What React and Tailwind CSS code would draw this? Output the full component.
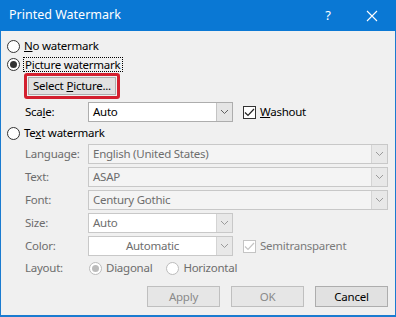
import React from 'react';

const font = { fontFamily: '"Noto Sans", "Open Sans", sans-serif' };

function Chevron({ disabled }) {
  return (
    <svg width="9" height="6" viewBox="0 0 9 6">
      <polyline points="1,1 4.5,4.5 8,1" fill="none" stroke={disabled ? '#9a9a9a' : '#606060'} strokeWidth="1" />
    </svg>
  );
}

function Radio({ checked, disabled }) {
  return (
    <span className={`flex items-center justify-center w-[13px] h-[13px] rounded-full border bg-white shrink-0
      ${disabled ? 'border-[#bcbcbc]' : 'border-[#333]'}`}>
      {checked && (
        <span className={`w-[7px] h-[7px] rounded-full ${disabled ? 'bg-[#bcbcbc]' : 'bg-[#333]'}`} />
      )}
    </span>
  );
}

function Check({ disabled }) {
  return (
    <span className={`flex items-center justify-center w-[13px] h-[13px] border bg-white shrink-0
      ${disabled ? 'border-[#c4c4c4]' : 'border-[#333]'}`}>
      <svg width="11" height="9" viewBox="0 0 11 9">
        <polyline points="1,4.5 4,7.5 10,1" fill="none" stroke={disabled ? '#c4c4c4' : '#222'} strokeWidth="1.2" />
      </svg>
    </span>
  );
}

function Select({ value, wide, disabled, center, white }) {
  return (
    <div className={`flex h-[20px] border ${wide ? 'w-[300px]' : 'w-[145px]'}
      ${disabled ? 'border-[#c8c8c8]' : 'border-[#adadad]'}
      ${white ? 'bg-white' : 'bg-[#f4f4f4]'}`}>
      <span className={`flex-1 flex items-center px-[4px] leading-none
        ${center ? 'justify-center' : ''} ${disabled ? 'text-[#6d6d6d]' : 'text-black'}`}>
        {value}
      </span>
      <span className={`w-[16px] flex items-center justify-center border-l
        ${disabled ? 'border-[#d4d4d4] bg-[#e8e8e8]' : 'border-[#c4c4c4] bg-[#e5e5e5]'}`}>
        <Chevron disabled={disabled} />
      </span>
    </div>
  );
}

function Field({ label, children }) {
  return (
    <div className="flex items-center h-[20px] mb-[3px]">
      <span className="w-[63px] text-[#6d6d6d]">{label}</span>
      {children}
    </div>
  );
}

export default function App() {
  return (
    <div className="w-[396px] h-[317px] flex flex-col bg-[#f0f0f0] border-x border-b-2 border-[#1a7bd0] text-black" style={font}>

      {/* Title bar */}
      <div className="h-[31px] -mx-px flex items-center bg-[#0a78d4] text-white text-[12.5px] shrink-0">
        <span className="pl-[9px] flex-1">Printed Watermark</span>
        <span className="w-[20px] text-center text-[13px] mr-[28px]">?</span>
        <svg width="12" height="12" viewBox="0 0 12 12" className="mr-[18px]">
          <path d="M1 1 L11 11 M11 1 L1 11" stroke="white" strokeWidth="1.1" />
        </svg>
      </div>

      {/* Body */}
      <div className="flex flex-col pl-[6px] pt-[6px] text-[11.5px] tracking-[-0.25px] whitespace-nowrap">
        <div className="flex items-center h-[18px] gap-[4px]">
          <Radio />
          <span><span className="underline">N</span>o watermark</span>
        </div>
        <div className="flex items-center h-[18px] gap-[3px]">
          <Radio checked />
          <span className="border border-dotted border-black pl-[1px] pr-[2px] leading-[13px]">
            P<span className="underline">i</span>cture watermark
          </span>
        </div>

        <div className="h-[26px] pl-[17px]">
          <div className="w-[96px] h-[26px] rounded-[3px] border-[3px] border-[#d3202f] p-px">
            <div className="h-full bg-[#e1e1e1] border border-[#adadad] flex items-center justify-center">
              Select <span className="underline ml-[3px]">P</span>icture...
            </div>
          </div>
        </div>

        <div className="flex items-center h-[20px] mt-[3px] pl-[18px]">
          <span className="w-[63px]">Sca<span className="underline">l</span>e:</span>
          <Select value="Auto" white />
          <span className="ml-[10px] mr-[4px]"><Check /></span>
          <span><span className="underline">W</span>ashout</span>
        </div>

        <div className="flex items-center h-[22px] gap-[4px]">
          <Radio />
          <span>Te<span className="underline">x</span>t watermark</span>
        </div>

        <div className="flex flex-col pl-[18px]">
          <Field label="Language:"><Select value="English (United States)" wide disabled /></Field>
          <Field label="Text:"><Select value="ASAP" wide disabled /></Field>
          <Field label="Font:"><Select value="Century Gothic" wide disabled /></Field>
          <Field label="Size:"><Select value="Auto" disabled white /></Field>
          <Field label="Color:">
            <Select value="Automatic" disabled white center />
            <span className="ml-[10px] mr-[4px]"><Check disabled /></span>
            <span className="text-[#7a7a7a]">Semitransparent</span>
          </Field>
          <div className="flex items-center h-[21px] -mt-[3px] pt-[3px] text-[#6d6d6d]">
            <span className="w-[64px]">Layout:</span>
            <Radio checked disabled />
            <span className="ml-[4px] mr-[14px]">Diagonal</span>
            <Radio disabled />
            <span className="ml-[4px]">Horizontal</span>
          </div>
        </div>

        <div className="flex justify-end gap-[11px] mt-[9px] pr-[7px]">
          <button className="w-[73px] h-[21px] border border-[#bfbfbf] bg-[#e6e6e6] text-[#8a8a8a]">Apply</button>
          <button className="w-[73px] h-[21px] border border-[#bfbfbf] bg-[#e6e6e6] text-[#8a8a8a]">OK</button>
          <button className="w-[73px] h-[21px] border border-[#adadad] bg-[#e1e1e1] text-black">Cancel</button>
        </div>
      </div>
    </div>
  );
}
